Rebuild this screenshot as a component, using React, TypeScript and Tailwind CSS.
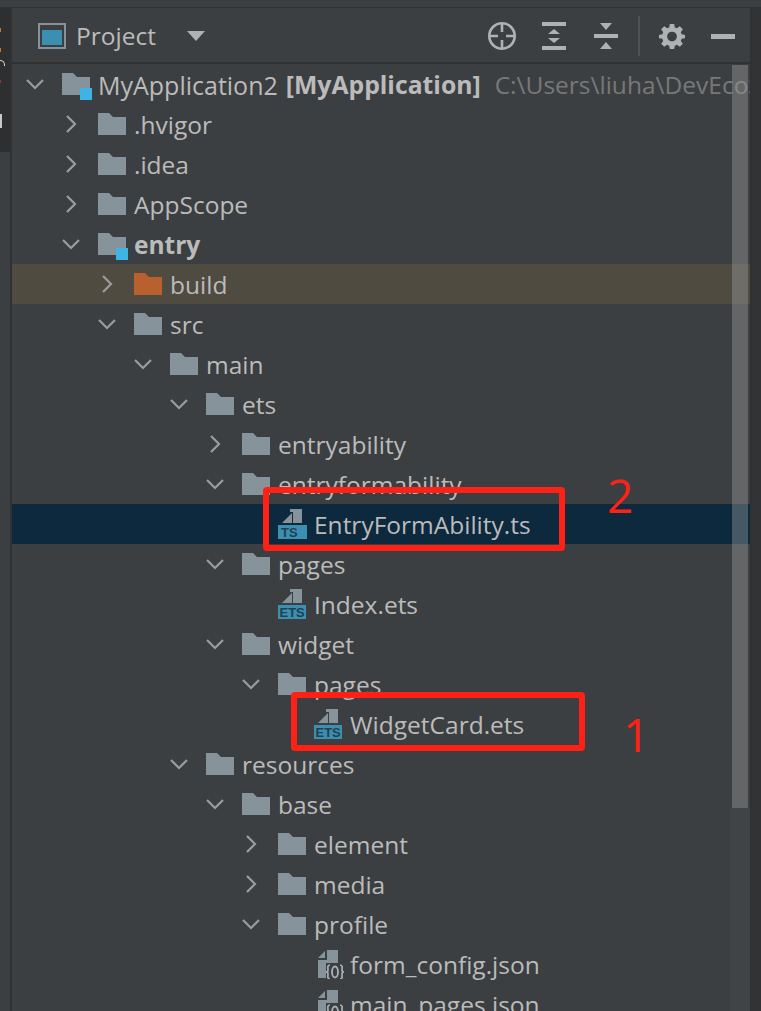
type Row = {
  label: string;
  depth: number;
  arrow?: "open" | "closed";
  icon: "folder" | "module" | "root" | "build" | "ts" | "ets" | "json";
  bold?: boolean;
  hint?: string;
  bg?: string;
};

const rows: Row[] = [
  { label: "MyApplication2", depth: 0, arrow: "open", icon: "root", hint: "C:\\Users\\liuha\\DevEcoS" },
  { label: ".hvigor", depth: 1, arrow: "closed", icon: "folder" },
  { label: ".idea", depth: 1, arrow: "closed", icon: "folder" },
  { label: "AppScope", depth: 1, arrow: "closed", icon: "folder" },
  { label: "entry", depth: 1, arrow: "open", icon: "module", bold: true },
  { label: "build", depth: 2, arrow: "closed", icon: "build", bg: "bg-[#4f4b41]" },
  { label: "src", depth: 2, arrow: "open", icon: "folder" },
  { label: "main", depth: 3, arrow: "open", icon: "folder" },
  { label: "ets", depth: 4, arrow: "open", icon: "folder" },
  { label: "entryability", depth: 5, arrow: "closed", icon: "folder" },
  { label: "entryformability", depth: 5, arrow: "open", icon: "folder" },
  { label: "EntryFormAbility.ts", depth: 6, icon: "ts", bg: "bg-[#0d293e]" },
  { label: "pages", depth: 5, arrow: "open", icon: "folder" },
  { label: "Index.ets", depth: 6, icon: "ets" },
  { label: "widget", depth: 5, arrow: "open", icon: "folder" },
  { label: "pages", depth: 6, arrow: "open", icon: "folder" },
  { label: "WidgetCard.ets", depth: 7, icon: "ets" },
  { label: "resources", depth: 4, arrow: "open", icon: "folder" },
  { label: "base", depth: 5, arrow: "open", icon: "folder" },
  { label: "element", depth: 6, arrow: "closed", icon: "folder" },
  { label: "media", depth: 6, arrow: "closed", icon: "folder" },
  { label: "profile", depth: 6, arrow: "open", icon: "folder" },
  { label: "form_config.json", depth: 7, icon: "json" },
  { label: "main_pages.json", depth: 7, icon: "json" },
];

function Arrow({ kind }: { kind?: "open" | "closed" }) {
  if (!kind) return <span className="w-[36px] shrink-0" />;
  return (
    <span className="flex w-[36px] shrink-0 justify-center">
      <svg width="20" height="20" viewBox="0 0 20 20" fill="none" stroke="#9a9c9e" strokeWidth="2.2">
        {kind === "open" ? <path d="M2 6l8 8 8-8" /> : <path d="M6 2l8 8-8 8" />}
      </svg>
    </span>
  );
}

function Folder({ color = "#87939a", badge }: { color?: string; badge?: boolean }) {
  return (
    <span className="relative block h-[22px] w-[28px] shrink-0">
      <svg width="28" height="22" viewBox="0 0 28 22" className="block">
        <path d="M0 0h11l4 4h13v18H0z" fill={color} />
      </svg>
      {badge && <span className="absolute left-[18px] top-[15px] h-[12px] w-[12px] bg-[#3db3e6]" />}
    </span>
  );
}

function SourceFile({ tag }: { tag: "TS" | "ETS" }) {
  const isTs = tag === "TS";
  return (
    <svg width="32" height="30" viewBox="0 0 32 30" className="block shrink-0">
      <path d="M4 14L14 4v10z" fill="#87939a" />
      <path d="M12 0h12v14h-9V3h-3z" fill="#87939a" />
      <rect x="0" y="16" width={isTs ? 29 : 28} height="14" fill="#3b8fb0" />
      <text
        x={isTs ? 3 : 1.5}
        y="28"
        fontSize="13"
        fontWeight="700"
        fill="#23404f"
        fontFamily="'Liberation Sans', sans-serif"
      >
        {tag}
      </text>
    </svg>
  );
}

function JsonFile() {
  return (
    <svg width="28" height="29" viewBox="0 0 28 29" className="block shrink-0">
      <path d="M0 8l7-7v7z" fill="#87939a" />
      <path d="M9 0h11v13H9z" fill="#87939a" />
      <path d="M0 10h8v18H0z" fill="#87939a" />
      <path d="M8 10h12v3H8z" fill="#87939a" />
      <path
        d="M12 15c-3 0-2 3-2 5s-1 2-2 2c1 0 2 0 2 2s-1 5 2 5M22 15c3 0 2 3 2 5s1 2 2 2c-1 0-2 0-2 2s1 5-2 5"
        fill="none"
        stroke="#a9b0b5"
        strokeWidth="1.7"
      />
      <ellipse cx="17" cy="22" rx="3" ry="5.500" fill="none" stroke="#a9b0b5" strokeWidth="1.900" />
    </svg>
  );
}

function RowIcon({ icon }: { icon: Row["icon"] }) {
  switch (icon) {
    case "root":
    case "module":
      return <Folder badge />;
    case "build":
      return <Folder color="#b8602e" />;
    case "ts":
      return <SourceFile tag="TS" />;
    case "ets":
      return <SourceFile tag="ETS" />;
    case "json":
      return <JsonFile />;
    default:
      return <Folder />;
  }
}

function TreeRow({ row }: { row: Row }) {
  const isFile = row.icon === "ts" || row.icon === "ets" || row.icon === "json";
  const isRoot = row.depth === 0;
  return (
    <div
      className={`relative flex h-[40px] shrink-0 items-center whitespace-nowrap ${row.bg ?? ""}`}
      style={{ paddingLeft: 5 + row.depth * 36 }}
    >
      <Arrow kind={row.arrow} />
      <span className={row.icon === "json" ? "ml-[13px]" : "ml-[9px]"}>
        <RowIcon icon={row.icon} />
      </span>
      <span
        className={`pt-[2px] leading-none text-[#bbbbbb] ${isRoot ? "text-[25px]" : "text-[24.5px]"} ${
          row.bold ? "font-bold" : ""
        } ${isFile ? "ml-[4px]" : "ml-[8px]"}`}
      >
        {row.label}
      </span>
      {isRoot && (
        <span className="ml-[8px] pt-[2px] text-[24.75px] font-bold leading-none text-[#bbbbbb]">[MyApplication]</span>
      )}
      {row.hint && <span className="ml-[14px] pt-[2px] text-[24.5px] leading-none text-[#787878]">{row.hint}</span>}
    </div>
  );
}

function Header() {
  return (
    <div className="flex h-[56px] shrink-0 items-center border-b-2 border-[#323232] pl-[26px] pt-[2px]">
      <svg width="28" height="26" viewBox="0 0 28 26" className="shrink-0">
        <rect x="1" y="1" width="26" height="24" fill="none" stroke="#87939a" strokeWidth="2" />
        <rect x="4" y="7" width="20" height="15" fill="#3b8fb0" />
      </svg>
      <span className="ml-[10px] pt-[1px] text-[24.5px] leading-none text-[#bbbbbb]">Project</span>
      <svg width="18" height="10" viewBox="0 0 18 10" className="ml-[31px] shrink-0">
        <path d="M0 0h18l-9 10z" fill="#afb1b3" />
      </svg>
      <svg width="30" height="30" viewBox="0 0 30 30" fill="none" stroke="#afb1b3" strokeWidth="2.6" className="ml-[282px] shrink-0">
        <circle cx="15" cy="15" r="12.7" />
        <path d="M15 2v9M15 19v9M2 15h9M19 15h9" />
      </svg>
      <svg width="24" height="28" viewBox="0 0 24 28" fill="#afb1b3" className="ml-[25px] shrink-0">
        <rect width="24" height="4" />
        <rect y="24" width="24" height="4" />
        <path d="M12 7l6 5H6zM12 21l-6-5h12z" />
      </svg>
      <svg width="24" height="28" viewBox="0 0 24 28" fill="#afb1b3" className="ml-[28px] shrink-0">
        <rect y="12" width="24" height="4" />
        <path d="M6 1h12l-6 7zM12 20l6 7H6z" />
      </svg>
      <span className="ml-[20px] h-[40px] w-[2px] shrink-0 bg-[#505254]" />
      <svg width="26" height="26" viewBox="0 0 24 24" fill="#afb1b3" fillRule="evenodd" className="ml-[19px] shrink-0">
        <path d="M10 1h4l.6 3.100 1.900.8L19.200 3 22 5.800l-1.900 2.700.8 1.900L24 11v3l-3.100.6-.8 1.900 1.900 2.700-2.800 2.800-2.700-1.900-1.900.8L14 24h-4l-.6-3.100-1.900-.8L4.800 22 2 19.200l1.900-2.700-.8-1.900L0 14v-3l3.100-.6.8-1.900L2 5.800 4.800 3l2.700 1.900 1.900-.8zM12 8a4.500 4.500 0 1 0 0 9 4.500 4.500 0 0 0 0-9z" />
      </svg>
      <span className="ml-[26px] h-[5px] w-[24px] shrink-0 bg-[#afb1b3]" />
    </div>
  );
}

export default function App() {
  return (
    <div className="relative flex h-[1011px] w-[761px] flex-col overflow-hidden bg-[#3c3f41] font-['Open_Sans','Noto_Sans',sans-serif]">
      <div className="h-[8px] shrink-0 border-b border-[#323232] bg-[#3c3f41]" />
      <div className="flex min-h-0 flex-1">
        <div className="flex w-[12px] shrink-0 flex-col border-r-2 border-[#323232]">
          <div className="relative h-[144px] shrink-0 bg-[#2d2f30]">
            <span className="absolute left-0 top-[20px] h-[4px] w-[1px] bg-[#c8732a]" />
            <span className="absolute left-0 top-[40px] h-[4px] w-[1px] bg-[#c8732a]" />
            <span className="absolute left-0 top-[52px] h-[6px] w-[5px] rounded-tr-full border-r border-t border-[#e0d8c0]" />
            <span className="absolute left-0 top-[72px] h-[3px] w-[1px] bg-[#a83030]" />
            <span className="absolute left-0 top-[106px] h-[14px] w-[2px] bg-[#c8c8c8]" />
          </div>
        </div>
        <div className="relative flex min-w-0 flex-1 flex-col overflow-hidden">
          <Header />
          <div className="flex flex-col">
            {rows.map((row, i) => (
              <TreeRow key={i} row={row} />
            ))}
          </div>
          <div className="absolute left-[718px] top-[800px] h-[210px] w-[20px] bg-[#414446]" />
          <div className="absolute left-[720px] top-[57px] h-[743px] w-[16px] bg-[#a0a0a0]/40" />
        </div>
        <div className="w-[11px] shrink-0 border-l-2 border-[#2f3132] bg-[#313335]" />
      </div>
      <div className="absolute left-[263px] top-[487px] h-[64px] w-[302px] rounded-[4px] border-[6px] border-[#ff2116]" />
      <div className="absolute left-[291px] top-[692px] h-[59px] w-[294px] rounded-[4px] border-[6px] border-[#ff2116]" />
      <span className="absolute left-[607px] top-[469px] text-[46px] leading-[52px] text-[#ff2116]">2</span>
      <span className="absolute left-[623px] top-[708px] text-[46px] leading-[52px] text-[#ff2116]">1</span>
    </div>
  );
}
